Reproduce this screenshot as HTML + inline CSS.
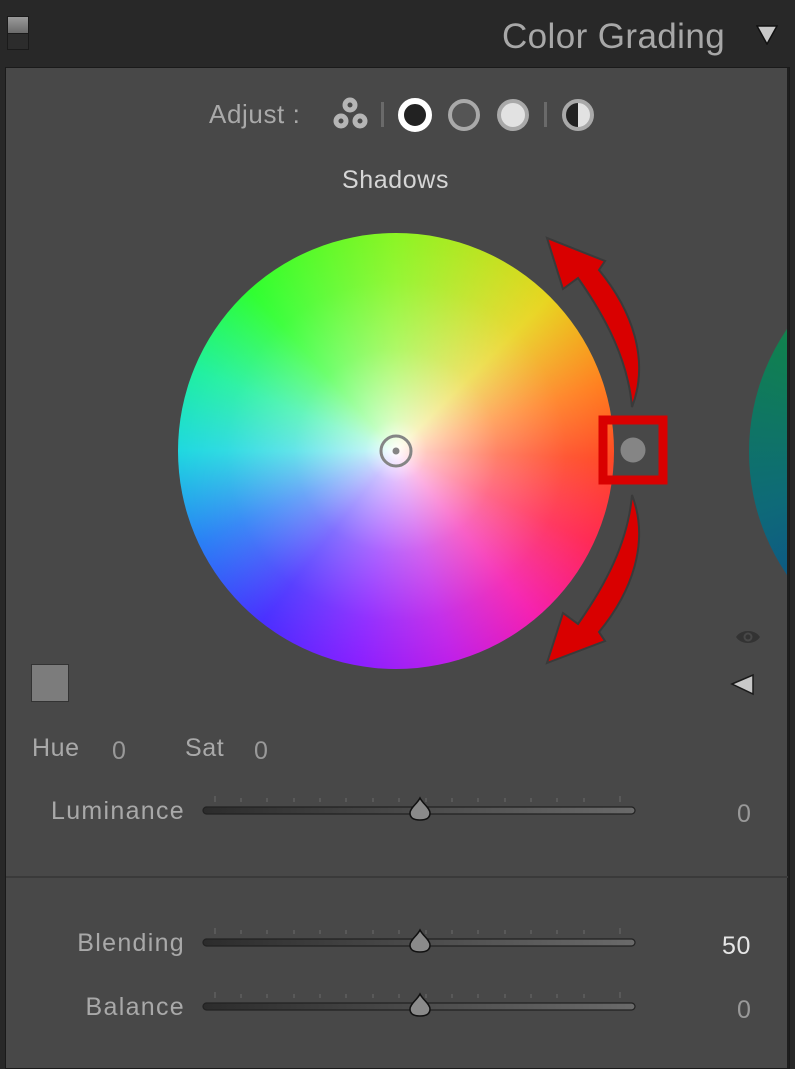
<!DOCTYPE html>
<html><head><meta charset="utf-8"><style>
html,body{margin:0;padding:0;}
body{width:795px;height:1065px;background:#282828;position:relative;overflow:hidden;font-family:"Liberation Sans",sans-serif;}
.a{position:absolute;}
.t{color:#a9a9a9;font-size:25px;line-height:1;letter-spacing:0.6px;}
.r{text-align:right;width:180px;}
.panel{left:5px;top:67px;width:783px;height:1000px;background:#484848;border:1px solid #1a1a1a;overflow:hidden;}
.wheel{border-radius:50%;}
</style></head><body>
<div class="a" style="left:7px;top:16px;width:20px;height:16px;background:linear-gradient(#9a9a9a,#6a6a6a);border:1px solid #1a1a1a;"></div>
<div class="a" style="left:7px;top:33px;width:20px;height:15px;background:#2c2c2c;border:1px solid #1a1a1a;"></div>
<div class="a t" style="left:502px;top:19px;font-size:35px;color:#a8a8a8;letter-spacing:0.4px;">Color Grading</div>
<svg class="a" style="left:756px;top:25px" width="22" height="20"><polygon points="1,1 21,1 11,19" fill="#c8c8c8" stroke="#111" stroke-width="1.5"/></svg>

<div class="a panel">
  <div class="a wheel" style="left:743px;top:166px;width:436px;height:436px;background:conic-gradient(from 0deg,#40a030 0deg,#107060 90deg,#0a5a80 180deg,#0c4a90 215deg,#0e6a78 255deg,#108050 300deg,#40a030 360deg);"></div>
  <div class="a" style="left:781px;top:0;width:3px;height:1000px;background:#1e1e1e;"></div>
</div>

<div class="a t" style="left:209px;top:101px;font-size:26px;">Adjust :</div>
<svg class="a" style="left:320px;top:90px" width="290" height="50">
  <g fill="none" stroke="#b5b5b5" stroke-width="5">
    <circle cx="30" cy="15" r="5"/><circle cx="21" cy="31" r="5"/><circle cx="40" cy="31" r="5"/>
  </g>
  <rect x="61" y="12" width="3" height="25" fill="#6a6a6a"/>
  <circle cx="95" cy="25" r="14" fill="#222" stroke="#fff" stroke-width="6"/>
  <circle cx="144" cy="25" r="14" fill="#555" stroke="#a9a9a9" stroke-width="4"/>
  <circle cx="193" cy="25" r="14" fill="#e2e2e2" stroke="#a9a9a9" stroke-width="4"/>
  <rect x="224" y="12" width="3" height="25" fill="#6a6a6a"/>
  <path d="M258,11 A14,14 0 0 0 258,39 Z" fill="#222"/>
  <path d="M258,11 A14,14 0 0 1 258,39 Z" fill="#e2e2e2"/>
  <circle cx="258" cy="25" r="14" fill="none" stroke="#a9a9a9" stroke-width="4"/>
</svg>

<div class="a t" style="left:342px;top:168px;color:#d6d6d6;font-size:25px;">Shadows</div>

<div class="a wheel" style="left:178px;top:233px;width:436px;height:436px;background:conic-gradient(from 0deg,#8cf525 0deg,#e8d520 45deg,#ff8020 72deg,#ff4a25 92deg,#ff2a55 115deg,#f520b0 140deg,#c020e8 165deg,#8a20ff 190deg,#4a30ff 218deg,#2a80f5 245deg,#20d8e0 270deg,#20f0a0 292deg,#30ff30 318deg,#8cf525 360deg);"></div>
<div class="a wheel" style="left:178px;top:233px;width:436px;height:436px;background:radial-gradient(circle,rgba(255,255,255,1) 0%,rgba(255,255,255,.7) 10%,rgba(255,255,255,.3) 33%,rgba(255,255,255,.08) 55%,rgba(255,255,255,0) 70%);"></div>
<svg class="a" style="left:378px;top:433px" width="36" height="36"><circle cx="18" cy="18" r="15" fill="none" stroke="#858585" stroke-width="3"/><circle cx="18" cy="18" r="3.5" fill="#858585"/></svg>

<svg class="a" style="left:520px;top:220px" width="160" height="470">
  <g fill="#d90000" stroke="#3a3a3a" stroke-width="2" stroke-linejoin="miter">
    <path d="M112,187 C130,140 112,90 79,50 L85,41 L27,18 L43,69 L58,58 C86,98 108,140 112,187 Z"/>
    <path d="M112,275 C130,322 112,372 79,412 L85,421 L27,443 L43,393 L58,404 C86,364 108,322 112,275 Z"/>
  </g>
  <rect x="83" y="200" width="60" height="60" fill="none" stroke="#d90000" stroke-width="9"/>
  <circle cx="113" cy="230" r="12.5" fill="#858585"/>
</svg>

<svg class="a" style="left:735px;top:628px" width="26" height="18"><path d="M1,9 C6,1 20,1 25,9 C20,17 6,17 1,9 Z" fill="#333"/><circle cx="13" cy="9" r="4.5" fill="#484848"/><circle cx="13" cy="9" r="2.5" fill="#333"/></svg>
<svg class="a" style="left:730px;top:673px" width="26" height="24"><polygon points="2,11 23,2 23,21" fill="#c8c8c8" stroke="#1a1a1a" stroke-width="1.5"/></svg>
<div class="a" style="left:31px;top:664px;width:36px;height:36px;background:#7c7c7c;border:1px solid #333;"></div>

<div class="a t" style="left:32px;top:736px;">Hue</div>
<div class="a t" style="left:112px;top:739px;color:#999;">0</div>
<div class="a t" style="left:185px;top:736px;">Sat</div>
<div class="a t" style="left:254px;top:739px;color:#999;">0</div>

<div class="a" style="left:6px;top:876px;width:782px;height:2px;background:#3a3a3a;"></div>

<div class="a t r" style="left:5px;top:799px;letter-spacing:1.3px;">Luminance</div>
<div class="a t" style="left:737px;top:802px;color:#999;">0</div>
<div class="a t r" style="left:5px;top:931px;letter-spacing:1.3px;">Blending</div>
<div class="a t" style="left:722px;top:934px;color:#e6e6e6;">50</div>
<div class="a t r" style="left:5px;top:995px;letter-spacing:1.3px;">Balance</div>
<div class="a t" style="left:737px;top:998px;color:#999;">0</div>

<svg class="a" style="left:195px;top:790px" width="450" height="240">
  <defs>
    <linearGradient id="tg" x1="0" x2="1"><stop offset="0" stop-color="#2c2c2c"/><stop offset="1" stop-color="#6a6a6a"/></linearGradient>
    <g id="sl">
      <g stroke="#6a6a6a" stroke-width="1">
        <line x1="20" y1="6" x2="20" y2="12"/><line x1="46" y1="8" x2="46" y2="12"/><line x1="72" y1="8" x2="72" y2="12"/><line x1="99" y1="8" x2="99" y2="12"/><line x1="125" y1="8" x2="125" y2="12"/><line x1="151" y1="8" x2="151" y2="12"/><line x1="178" y1="8" x2="178" y2="12"/><line x1="204" y1="8" x2="204" y2="12"/><line x1="231" y1="8" x2="231" y2="12"/><line x1="257" y1="8" x2="257" y2="12"/><line x1="283" y1="8" x2="283" y2="12"/><line x1="310" y1="8" x2="310" y2="12"/><line x1="336" y1="8" x2="336" y2="12"/><line x1="362" y1="8" x2="362" y2="12"/><line x1="389" y1="8" x2="389" y2="12"/><line x1="425" y1="6" x2="425" y2="12"/>
      </g>
      <rect x="8" y="17" width="432" height="7" rx="3.5" fill="url(#tg)" stroke="#222" stroke-width="1.2"/>
      <path d="M225,8 C222,14 215,18 215,23 C215,28 219,30 225,30 C231,30 235,28 235,23 C235,18 228,14 225,8 Z" fill="#8a8a8a" stroke="#111" stroke-width="1.5"/>
    </g>
  </defs>
  <use href="#sl" y="0"/>
  <use href="#sl" y="132"/>
  <use href="#sl" y="196"/>
</svg>
</body></html>
